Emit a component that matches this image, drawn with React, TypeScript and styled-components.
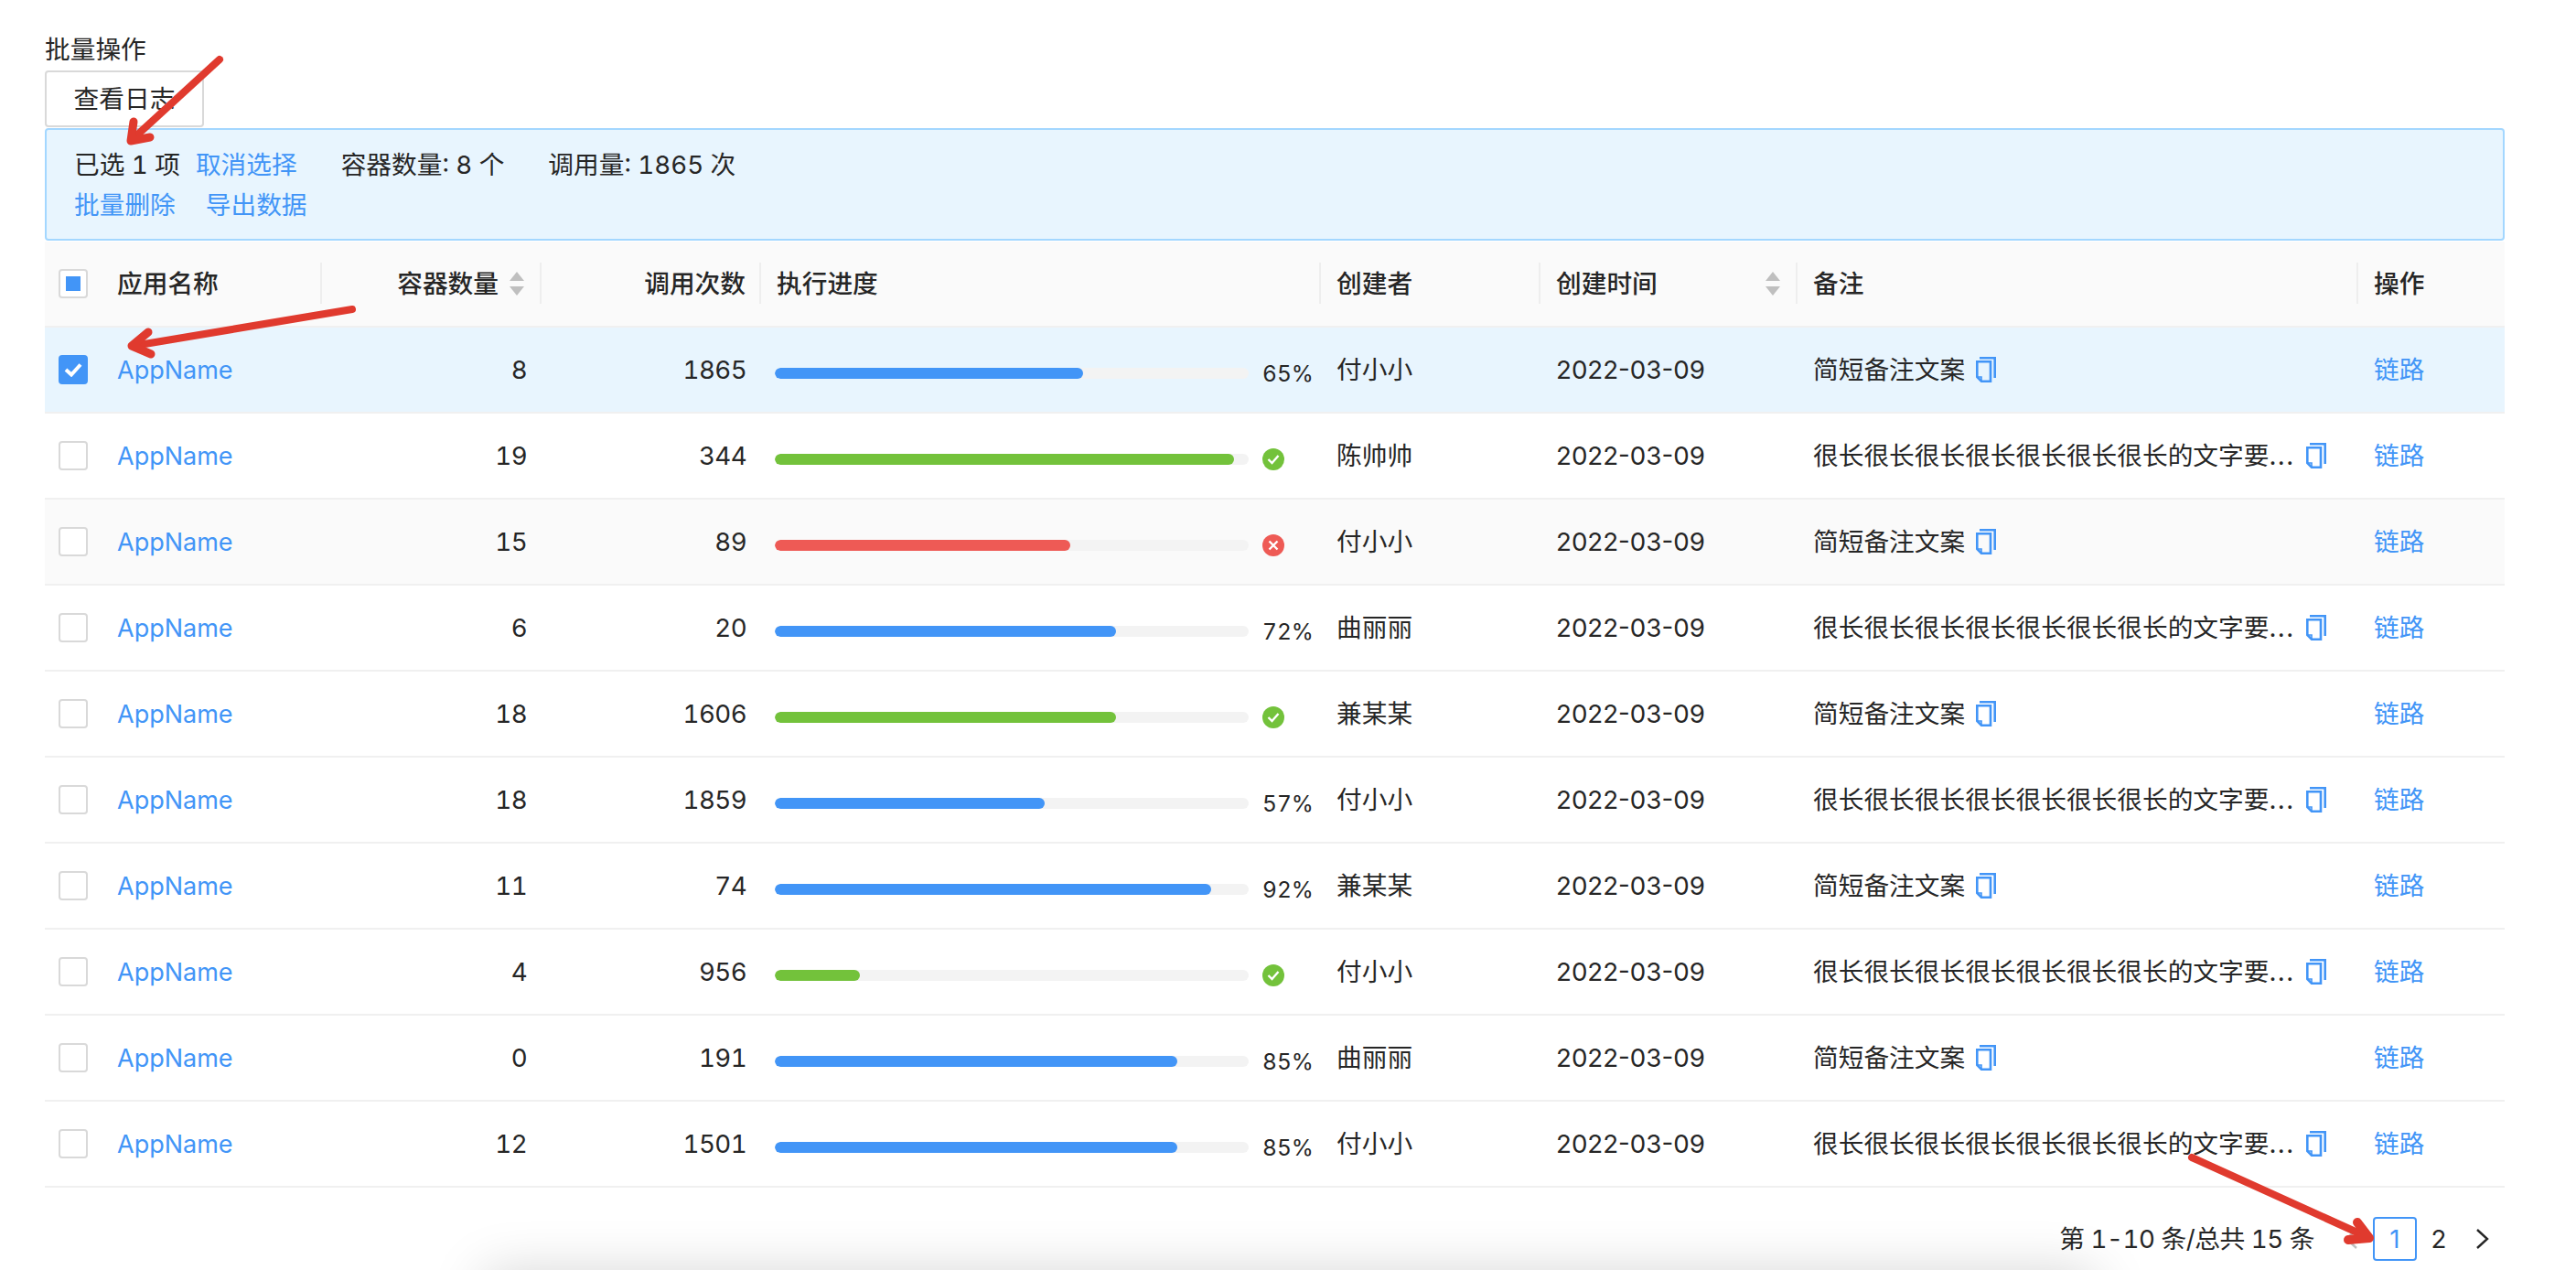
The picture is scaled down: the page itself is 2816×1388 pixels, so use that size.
import React from "react";
import styled, { createGlobalStyle } from "styled-components";

const BLUE = "#4295f7";
const TEXT = "#262626";
const SELECTED = "#e8f5fe";

const GlobalStyle = createGlobalStyle`
  html, body {
    margin: 0;
    padding: 0;
    background: #fff;
  }
  body {
    font-family: Inter, "Noto Sans CJK SC", sans-serif;
    font-size: 27.7px;
    line-height: 40px;
    color: ${TEXT};
  }
`;

const Page = styled.div`
  position: relative;
  width: 2816px;
  height: 1388px;
  overflow: hidden;
  box-sizing: border-box;
  padding: 34px 78px 0 49px;
`;

const Label = styled.div`
  height: 40px;
  margin-bottom: 3px;
`;

const Button = styled.button`
  display: block;
  width: 174px;
  height: 62px;
  padding: 0;
  background: #fff;
  border: 2px solid #d9d9d9;
  border-radius: 4px;
  font: inherit;
  color: inherit;
`;

const Alert = styled.div`
  box-sizing: border-box;
  height: 123px;
  margin: 1px 0;
  padding: 16px 30px 0;
  background: ${SELECTED};
  border: 2px solid #a3d7ff;
  border-radius: 4px;
  font-variant-numeric: tabular-nums;
`;

const AlertLine = styled.div`
  display: flex;
  align-items: center;
  height: 44px;
`;

const Link = styled.a<{ $left?: number }>`
  color: ${BLUE};
  margin-left: ${(p) => p.$left || 0}px;
  cursor: pointer;
`;

const AppLink = styled(Link)`
  font-size: 27px;
`;

const Stat = styled.span`
  margin-left: 48px;
`;

const Table = styled.table`
  width: 2689px;
  table-layout: fixed;
  border-collapse: separate;
  border-spacing: 0;
`;

const Th = styled.th<{ $right?: boolean; $noLine?: boolean }>`
  position: relative;
  box-sizing: border-box;
  height: 94px;
  padding: 0 17px;
  background: #fafafa;
  border-bottom: 2px solid #f0f0f0;
  text-align: ${(p) => (p.$right ? "right" : "left")};
  font-weight: 500;

  &::after {
    content: "";
    display: ${(p) => (p.$noLine ? "none" : "block")};
    position: absolute;
    top: 23px;
    right: 0;
    width: 2px;
    height: 45px;
    background: #eeeeee;
  }
`;

const Row = styled.tr<{ $selected?: boolean; $hover?: boolean }>`
  background: ${(p) => (p.$selected ? SELECTED : p.$hover ? "#fafafa" : "#fff")};
`;

const Td = styled.td`
  box-sizing: border-box;
  height: 94px;
  padding: 0 17px;
  border-bottom: 2px solid #f0f0f0;
  white-space: nowrap;
`;

const NumTd = styled(Td)`
  padding-right: 16px;
  text-align: right;
  font-variant-numeric: tabular-nums;
  letter-spacing: -0.6px;
`;

const SelectTd = styled(Td)`
  padding: 0 0 0 15px;
`;

const SelectTh = styled(Th)`
  padding: 0 0 0 15px;
`;

const ProgressTd = styled(Td)`
  padding: 0 0 0 15px;
`;

const SortHead = styled.div<{ $spread?: boolean }>`
  display: flex;
  align-items: center;
  justify-content: ${(p) => (p.$spread ? "space-between" : "flex-end")};
  gap: 12px;
  padding-right: 2px;
`;

const CheckBox = styled.span<{ $checked?: boolean }>`
  display: flex;
  align-items: center;
  justify-content: center;
  box-sizing: border-box;
  width: 32px;
  height: 32px;
  border: 2px solid ${(p) => (p.$checked ? BLUE : "#d9d9d9")};
  border-radius: 4px;
  background: ${(p) => (p.$checked ? BLUE : "#fff")};
`;

const CheckDot = styled.span`
  display: block;
  width: 16px;
  height: 16px;
  background: ${BLUE};
`;

const ProgressWrap = styled.div`
  display: flex;
  align-items: center;
  padding-top: 8px;
`;

const Track = styled.div`
  flex: none;
  width: 518px;
  height: 12px;
  border-radius: 6px;
  background: #f3f3f3;
  overflow: hidden;
`;

const Fill = styled.div<{ $status: Status }>`
  height: 100%;
  border-radius: 6px;
  background: ${(p) =>
    p.$status === "success" ? "#73c23b" : p.$status === "fail" ? "#ee5a55" : BLUE};
`;

const Percent = styled.span`
  margin-left: 15px;
  font-size: 24.5px;
  line-height: 24px;
  font-variant-numeric: tabular-nums;
`;

const StatusDot = styled.span<{ $fail?: boolean }>`
  display: flex;
  align-items: center;
  justify-content: center;
  margin-left: 15px;
  width: 24px;
  height: 24px;
  border-radius: 50%;
  background: ${(p) => (p.$fail ? "#ee5a55" : "#73c23b")};
`;

const Note = styled.div`
  display: flex;
  align-items: center;
  gap: 12px;
`;

const Dots = styled.span`
  letter-spacing: 1.4px;
`;

const Footer = styled.div`
  display: flex;
  align-items: center;
  justify-content: flex-end;
  height: 48px;
  margin-top: 32px;
`;

const Summary = styled.span`
  margin-right: 16px;
  font-variant-numeric: tabular-nums;
  letter-spacing: -0.45px;
`;

const PageItem = styled.span<{ $active?: boolean }>`
  display: flex;
  align-items: center;
  justify-content: center;
  box-sizing: border-box;
  width: 48px;
  height: 48px;
  border: 2px solid ${(p) => (p.$active ? BLUE : "transparent")};
  border-radius: 4px;
  color: ${(p) => (p.$active ? BLUE : TEXT)};
`;

const WindowShadow = styled.div`
  position: absolute;
  left: 540px;
  top: 1402px;
  width: 1740px;
  height: 40px;
  box-shadow: 0 0 60px 10px rgba(0, 0, 0, 0.18);
`;

const Arrows = styled.svg`
  position: absolute;
  left: 0;
  top: 0;
  pointer-events: none;
`;

type Status = "normal" | "success" | "fail";

interface RowData {
  count: number;
  calls: number;
  percent: number;
  bar?: number;
  status: Status;
  owner: string;
}

const rows: RowData[] = [
  { count: 8, calls: 1865, percent: 65, status: "normal", owner: "付小小" },
  { count: 19, calls: 344, percent: 97, status: "success", owner: "陈帅帅" },
  { count: 15, calls: 89, percent: 62.4, status: "fail", owner: "付小小" },
  { count: 6, calls: 20, percent: 72, status: "normal", owner: "曲丽丽" },
  { count: 18, calls: 1606, percent: 72, status: "success", owner: "兼某某" },
  { count: 18, calls: 1859, percent: 57, status: "normal", owner: "付小小" },
  { count: 11, calls: 74, percent: 92, status: "normal", owner: "兼某某" },
  { count: 4, calls: 956, percent: 18, status: "success", owner: "付小小" },
  { count: 0, calls: 191, percent: 85, status: "normal", owner: "曲丽丽" },
  { count: 12, calls: 1501, percent: 85, status: "normal", owner: "付小小" },
];

const SortIcon = () => (
  <svg width="16" height="26" viewBox="0 0 16 26">
    <polygon points="8,0 16,10 0,10" fill="#bfbfbf" />
    <polygon points="0,16 16,16 8,26" fill="#bfbfbf" />
  </svg>
);

const CopyIcon = () => (
  <svg width="22" height="28" viewBox="0 0 22 28" fill="none" stroke={BLUE} strokeWidth="2.6">
    <path d="M4 1.3H20.7V23" />
    <path d="M1.3 5.3H16V26.7H6L1.3 22Z" />
    <path d="M1.3 22H6V26.7" strokeWidth="1.6" />
  </svg>
);

const Chevron = ({ left, color }: { left?: boolean; color: string }) => (
  <svg width="14" height="22" viewBox="0 0 14 22" fill="none" stroke={color} strokeWidth="2.4">
    <path d={left ? "M13 1L2 11L13 21" : "M1 1L12 11L1 21"} />
  </svg>
);

const Progress = ({ percent, status }: { percent: number; status: Status }) => (
  <ProgressWrap>
    <Track>
      <Fill $status={status} style={{ width: `${percent}%` }} />
    </Track>
    {status === "normal" && <Percent>{percent}%</Percent>}
    {status === "success" && (
      <StatusDot>
        <svg width="14" height="12" viewBox="0 0 14 12" fill="none" stroke="#fff" strokeWidth="2.4">
          <path d="M1.5 6L5.5 10L12.5 2" />
        </svg>
      </StatusDot>
    )}
    {status === "fail" && (
      <StatusDot $fail>
        <svg width="12" height="12" viewBox="0 0 12 12" fill="none" stroke="#fff" strokeWidth="2.4">
          <path d="M1.5 1.5L10.5 10.5M10.5 1.5L1.5 10.5" />
        </svg>
      </StatusDot>
    )}
  </ProgressWrap>
);

export default function App() {
  return (
    <>
      <GlobalStyle />
      <Page>
        <Label>批量操作</Label>
        <Button>查看日志</Button>
        <Alert>
          <AlertLine>
            <span>已选 1 项</span>
            <Link $left={17}>取消选择</Link>
            <Stat>容器数量: 8 个</Stat>
            <Stat>调用量: 1865 次</Stat>
          </AlertLine>
          <AlertLine>
            <Link>批量删除</Link>
            <Link $left={33}>导出数据</Link>
          </AlertLine>
        </Alert>
        <Table>
          <colgroup>
            <col width="62" />
            <col width="241" />
            <col width="240" />
            <col width="240" />
            <col width="612" />
            <col width="240" />
            <col width="281" />
            <col width="613" />
            <col width="160" />
          </colgroup>
          <thead>
            <tr>
              <SelectTh $noLine>
                <CheckBox>
                  <CheckDot />
                </CheckBox>
              </SelectTh>
              <Th>应用名称</Th>
              <Th $right>
                <SortHead>
                  容器数量
                  <SortIcon />
                </SortHead>
              </Th>
              <Th $right>调用次数</Th>
              <Th>执行进度</Th>
              <Th>创建者</Th>
              <Th>
                <SortHead $spread>
                  创建时间
                  <SortIcon />
                </SortHead>
              </Th>
              <Th>备注</Th>
              <Th $noLine>操作</Th>
            </tr>
          </thead>
          <tbody>
            {rows.map((row, i) => (
              <Row key={i} $selected={i === 0} $hover={i === 2}>
                <SelectTd>
                  <CheckBox $checked={i === 0}>
                    {i === 0 && (
                      <svg width="20" height="16" viewBox="0 0 20 16" fill="none" stroke="#fff" strokeWidth="4">
                        <path d="M2 8L8 13.5L18 2.5" />
                      </svg>
                    )}
                  </CheckBox>
                </SelectTd>
                <Td>
                  <AppLink>AppName</AppLink>
                </Td>
                <NumTd>{row.count}</NumTd>
                <NumTd>{row.calls}</NumTd>
                <ProgressTd>
                  <Progress percent={row.percent} status={row.status} />
                </ProgressTd>
                <Td>{row.owner}</Td>
                <Td>2022-03-09</Td>
                <Td>
                  <Note>
                    {i % 2 === 0 ? (
                      "简短备注文案"
                    ) : (
                      <span>
                        很长很长很长很长很长很长很长的文字要<Dots>...</Dots>
                      </span>
                    )}
                    <CopyIcon />
                  </Note>
                </Td>
                <Td>
                  <Link>链路</Link>
                </Td>
              </Row>
            ))}
          </tbody>
        </Table>
        <Footer>
          <Summary>第 1-10 条/总共 15 条</Summary>
          <PageItem>
            <Chevron left color="#bfbfbf" />
          </PageItem>
          <PageItem $active>1</PageItem>
          <PageItem>2</PageItem>
          <PageItem>
            <Chevron color={TEXT} />
          </PageItem>
        </Footer>
        <WindowShadow />
        <Arrows width="2816" height="1388" viewBox="0 0 2816 1388" fill="none" stroke="#e03a2e" strokeLinecap="round" strokeLinejoin="round">
          <path d="M240 65L145 152" strokeWidth="8" />
          <path d="M146 133L143 154L164 150" strokeWidth="9" />
          <path d="M385 338L146 378" strokeWidth="8" />
          <path d="M162 363L144 378L165 387" strokeWidth="9" />
          <path d="M2396 1265L2588 1352" strokeWidth="8" />
          <path d="M2577 1336L2590 1353L2567 1355" strokeWidth="10" />
        </Arrows>
      </Page>
    </>
  );
}
